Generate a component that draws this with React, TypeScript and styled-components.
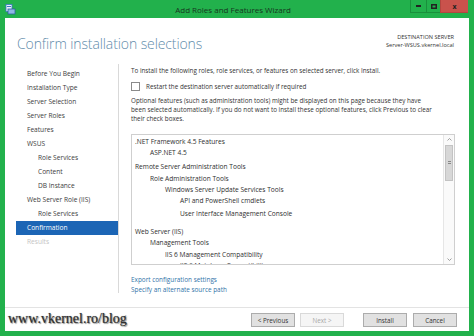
import React from 'react';
import styled, { createGlobalStyle } from 'styled-components';

const GREEN = '#22b14c';
const UI_FONT = '"Open Sans", "Noto Sans", "DejaVu Sans", sans-serif';

const GlobalStyle = createGlobalStyle`
  html, body { margin: 0; padding: 0; background: ${GREEN}; }
  body { font-family: ${UI_FONT}; }
`;

const Frame = styled.div`
  position: relative; width: 474px; height: 336px; background: ${GREEN};
  display: flex; flex-direction: column; overflow: hidden;
`;

const TitleBar = styled.div`
  height: 18px; display: flex; align-items: center; position: relative;
`;

const AppIcon = styled.svg`
  width: 11px; height: 11px; margin-left: 5px; flex: none;
`;

const TitleText = styled.div`
  flex: 1; text-align: center; font-size: 8px; color: #17361f; padding-left: 40px;
`;

const Controls = styled.div`
  display: flex; align-self: flex-start; margin-right: 6px; height: 13px;
`;

const CtrlBtn = styled.div<{ $close?: boolean; $w: number }>`
  width: ${p => p.$w}px; height: 13px; display: flex; align-items: center; justify-content: center;
  background: ${p => (p.$close ? '#c9524c' : 'transparent')};
  border-left: 1px solid ${p => (p.$close ? '#b24640' : '#1a8f3c')};
  border-bottom: 1px solid ${p => (p.$close ? '#b24640' : '#1a8f3c')};
  box-sizing: border-box; font-size: 7px; font-weight: bold; color: #222;
`;

const Client = styled.div`
  flex: 1; margin: 0 5px 5px; background: #fff; display: flex; flex-direction: column;
`;

const Header = styled.div`
  height: 46px; display: flex; justify-content: space-between; align-items: flex-start;
  padding: 0 15px 0 12px; box-sizing: border-box;
`;

const Heading = styled.h1`
  margin: 16px 0 0; font-size: 14px; font-weight: 300; color: #5f8cab; letter-spacing: -0.1px;
`;

const Destination = styled.div`
  margin-top: 15px; text-align: right; font-size: 5.6px; line-height: 8px; color: #333;
`;

const Main = styled.div`
  flex: 1; display: flex; min-height: 0;
`;

const Nav = styled.div`
  width: 102px; margin-left: 11px; margin-bottom: 14px; padding-top: 3px;
  border-right: 1px solid #d9d9d9; display: flex; flex-direction: column;
`;

const NavItem = styled.div<{ $indent?: boolean; $active?: boolean; $disabled?: boolean }>`
  height: 14px; line-height: 14px; font-size: 6.6px; white-space: nowrap;
  padding-left: ${p => (p.$indent ? 22 : 11)}px;
  background: ${p => (p.$active ? '#1c65b5' : 'transparent')};
  color: ${p => (p.$active ? '#fff' : p.$disabled ? '#c4c4c4' : '#3c3c3c')};
`;

const Content = styled.div`
  flex: 1; padding: 2px 14px 0 12px; display: flex; flex-direction: column;
  font-size: 6.3px; color: #333;
`;

const Para = styled.div<{ $mt?: number }>`
  line-height: 9px; margin-top: ${p => p.$mt ?? 0}px; white-space: nowrap;
`;

const CheckRow = styled.label`
  display: flex; align-items: center; gap: 6px; height: 9px; margin-top: 7px;
`;

const CheckBox = styled.span`
  width: 7px; height: 7px; border: 1px solid #8a8a8a; background: #fff; flex: none;
`;

const ListBox = styled.div`
  margin-top: 11px; height: 131px; border: 1px solid #cfcfcf; box-sizing: border-box;
  display: flex; overflow: hidden;
`;

const ListItems = styled.div`
  flex: 1; padding-top: 1px; overflow: hidden; font-size: 6.6px; color: #2e2e2e;
`;

const ListItem = styled.div<{ $level: number; $gap: number }>`
  height: 11px; line-height: 11px; white-space: nowrap;
  padding-left: ${p => 3 + p.$level * 15}px; margin-top: ${p => p.$gap}px;
`;

const Scrollbar = styled.div`
  width: 10px; border-left: 1px solid #e6e6e6; background: #fafafa;
  display: flex; flex-direction: column; align-items: stretch;
`;

const Arrow = styled.div`
  height: 9px; display: flex; align-items: center; justify-content: center;
`;

const Thumb = styled.div`
  height: 34px; margin: 1px 1px 0; background: #d7d7d7; border: 1px solid #c3c3c3;
  display: flex; align-items: center; justify-content: center;
  &::after { content: ''; width: 3px; height: 4px; background: repeating-linear-gradient(#888 0 1px, transparent 1px 2px); }
`;

const Track = styled.div`
  flex: 1;
`;

const Links = styled.div`
  margin-top: 10px; display: flex; flex-direction: column; font-size: 6.4px;
`;

const Link = styled.a`
  color: #2f73a8; text-decoration: none; line-height: 10px;
`;

const Footer = styled.div`
  height: 24px; border-top: 1px solid #e3e3e3; box-sizing: border-box;
  display: flex; justify-content: flex-end; align-items: flex-start; padding: 5px 12px 0 0;
`;

const Button = styled.button<{ $disabled?: boolean; $ml?: number }>`
  width: 44px; height: 14px; margin-left: ${p => p.$ml ?? 0}px; padding: 0;
  font-family: ${UI_FONT}; font-size: 6.3px;
  background: ${p => (p.$disabled ? '#f5f5f5' : '#e1e1e1')};
  border: 1px solid ${p => (p.$disabled ? '#d9d9d9' : '#acacac')};
  color: ${p => (p.$disabled ? '#a8a8a8' : '#333')};
`;

const Watermark = styled.div`
  position: absolute; left: 8px; top: 311px; font-family: "Liberation Serif", serif;
  font-size: 14px; font-weight: normal; color: #2e2e2e;
  text-shadow: 1px 1px 1px rgba(0, 0, 0, 0.45), 0 0 1px rgba(0, 0, 0, 0.4);
`;

const navItems: { label: string; indent?: boolean; active?: boolean; disabled?: boolean }[] = [
  { label: 'Before You Begin' },
  { label: 'Installation Type' },
  { label: 'Server Selection' },
  { label: 'Server Roles' },
  { label: 'Features' },
  { label: 'WSUS' },
  { label: 'Role Services', indent: true },
  { label: 'Content', indent: true },
  { label: 'DB Instance', indent: true },
  { label: 'Web Server Role (IIS)' },
  { label: 'Role Services', indent: true },
  { label: 'Confirmation', active: true },
  { label: 'Results', disabled: true },
];

const features: [string, number, number][] = [
  ['.NET Framework 4.5 Features', 0, 0],
  ['ASP.NET 4.5', 1, 0],
  ['Remote Server Administration Tools', 0, 3],
  ['Role Administration Tools', 1, 1],
  ['Windows Server Update Services Tools', 2, 0],
  ['API and PowerShell cmdlets', 3, 0],
  ['User Interface Management Console', 3, 2],
  ['Web Server (IIS)', 0, 7],
  ['Management Tools', 1, 0],
  ['IIS 6 Management Compatibility', 2, 1],
  ['IIS 6 Metabase Compatibility', 3, 0],
];

export default function App() {
  return (
    <>
      <GlobalStyle />
      <Frame>
        <TitleBar>
          <AppIcon viewBox="0 0 11 11">
            <rect x="1" y="0.5" width="6" height="7" fill="#e9f1fb" stroke="#3b78c4" strokeWidth="0.8" />
            <rect x="2" y="2" width="4" height="1" fill="#3b78c4" />
            <rect x="3" y="5" width="7" height="5" fill="#8fb7e6" stroke="#2d5f9e" strokeWidth="0.8" />
          </AppIcon>
          <TitleText>Add Roles and Features Wizard</TitleText>
          <Controls>
            <CtrlBtn $w={16}>
              <svg width="5" height="2"><rect width="5" height="2" fill="#222" /></svg>
            </CtrlBtn>
            <CtrlBtn $w={14}>
              <svg width="6" height="5"><rect x="0.75" y="0.75" width="4.5" height="3.5" fill="none" stroke="#222" strokeWidth="1.5" /></svg>
            </CtrlBtn>
            <CtrlBtn $w={28} $close>x</CtrlBtn>
          </Controls>
        </TitleBar>
        <Client>
          <Header>
            <Heading>Confirm installation selections</Heading>
            <Destination>
              DESTINATION SERVER<br />Server-WSUS.vkernel.local
            </Destination>
          </Header>
          <Main>
            <Nav>
              {navItems.map((n, i) => (
                <NavItem key={i} $indent={n.indent} $active={n.active} $disabled={n.disabled}>{n.label}</NavItem>
              ))}
            </Nav>
            <Content>
              <Para>To install the following roles, role services, or features on selected server, click Install.</Para>
              <CheckRow><CheckBox />Restart the destination server automatically if required</CheckRow>
              <Para $mt={5}>
                Optional features (such as administration tools) might be displayed on this page because they have<br />
                been selected automatically. If you do not want to install these optional features, click Previous to clear<br />
                their check boxes.
              </Para>
              <ListBox>
                <ListItems>
                  {features.map(([label, level, gap], i) => (
                    <ListItem key={i} $level={level} $gap={gap}>{label}</ListItem>
                  ))}
                </ListItems>
                <Scrollbar>
                  <Arrow>
                    <svg width="5" height="3"><path d="M0.5 2.5 L2.5 0.5 L4.5 2.5" fill="none" stroke="#888" strokeWidth="0.8" /></svg>
                  </Arrow>
                  <Thumb />
                  <Track />
                  <Arrow>
                    <svg width="5" height="3"><path d="M0.5 0.5 L2.5 2.5 L4.5 0.5" fill="none" stroke="#888" strokeWidth="0.8" /></svg>
                  </Arrow>
                </Scrollbar>
              </ListBox>
              <Links>
                <Link>Export configuration settings</Link>
                <Link>Specify an alternate source path</Link>
              </Links>
            </Content>
          </Main>
          <Footer>
            <Button>&lt; Previous</Button>
            <Button $disabled $ml={5}>Next &gt;</Button>
            <Button $ml={19}>Install</Button>
            <Button $ml={6}>Cancel</Button>
          </Footer>
        </Client>
        <Watermark>www.vkernel.ro/blog</Watermark>
      </Frame>
    </>
  );
}
